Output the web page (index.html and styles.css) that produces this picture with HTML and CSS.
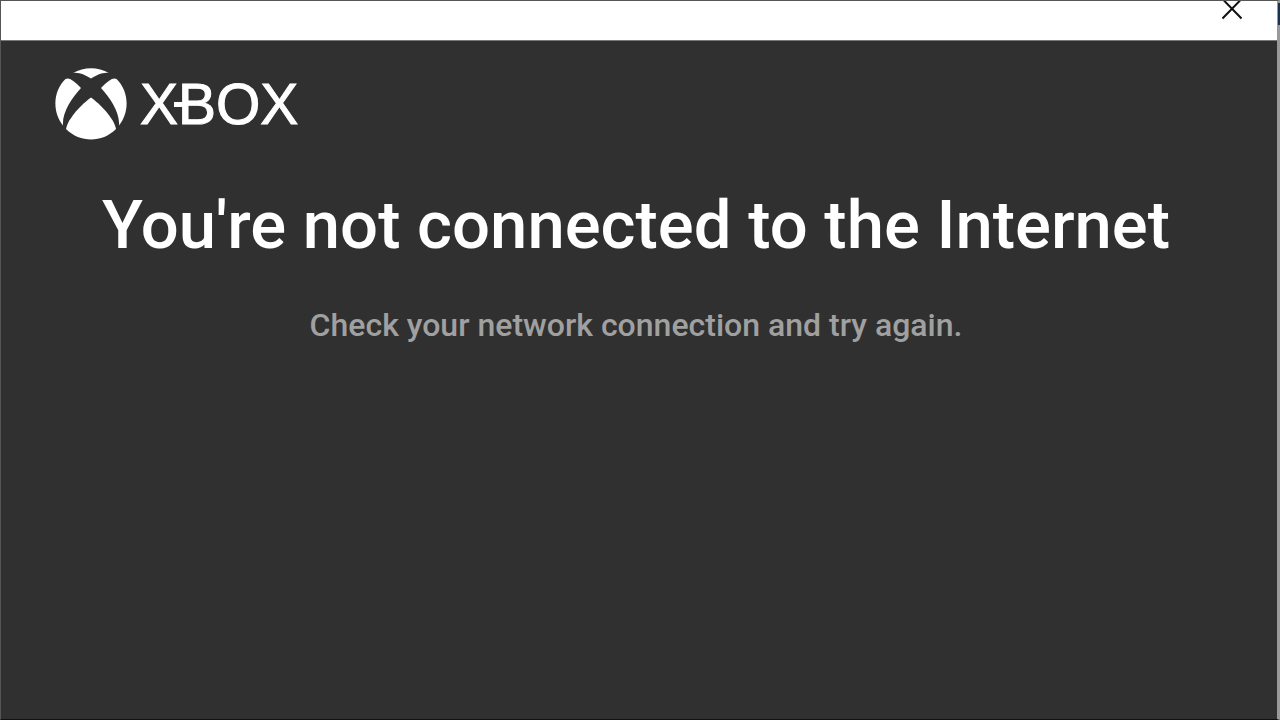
FILE: index.html
```html
<!DOCTYPE html>
<html lang="en">
<head>
<meta charset="utf-8">
<meta name="viewport" content="width=device-width, initial-scale=1">
<title>Xbox</title>
<link rel="stylesheet" href="styles.css">
</head>
<body>
<div class="window">
  <header class="titlebar">
    <button class="close" type="button" aria-label="Close">
      <svg class="close-icon" viewBox="0 0 20 20" aria-hidden="true"><path d="M0.500-2 19.500 17.500M19.500-2 0.500 17.500"/></svg>
    </button>
  </header>
  <main class="content">
    <div class="brand">
      <svg class="sphere" viewBox="0 0 72 72" aria-hidden="true">
        <path d="M18 5C29-1.500 43-1.500 54 5C48 4 41 7.500 36 10.500C31 7.500 24 4 18 5Z"/>
        <path d="M10.500 11Q15 8 26 20C17 30 7 44 8 57.500C-3 44-2 23 10.500 11Z"/>
        <path d="M61.500 11Q57 8 46 20C55 30 65 44 64 57.500C75 44 74 23 61.500 11Z"/>
        <path d="M36 29.500C45 36 59 50 61 61C47 75 25 75 11 61C13 50 27 36 36 29.500Z"/>
      </svg>
      <span class="wordmark">XBOX</span>
    </div>
    <h1 class="heading">You're not connected to the Internet</h1>
    <p class="message">Check your network connection and try again.</p>
  </main>
</div>
</body>
</html>
```
FILE: styles.css
```css
* { box-sizing: border-box; }
body {
  margin: 0;
  background: #303030;
  font-family: Roboto, sans-serif;
}
.window {
  position: relative;
  display: flex;
  flex-direction: column;
  min-height: 100vh;
  border: 1px solid #555;
  border-bottom-color: #111;
  border-right: 3px solid #999;
  background: #303030;
}
.window::after {
  content: "";
  position: absolute;
  top: 2px;
  right: -3px;
  width: 2px;
  height: 22px;
  background: #1c3150;
}
.titlebar {
  display: flex;
  justify-content: flex-end;
  height: 40px;
  padding-right: 22px;
  background: #fff;
  border-bottom: 1px solid #777;
}
.close {
  display: flex;
  justify-content: center;
  width: 46px;
  height: 20px;
  padding: 0;
  border: 0;
  background: transparent;
}
.close-icon {
  width: 20px;
  height: 20px;
  fill: none;
  stroke: #111;
  stroke-width: 2;
}
.content { padding: 27px 6px 40px 0; }
.brand {
  display: flex;
  align-items: center;
  gap: 13px;
  height: 72px;
  padding-left: 54px;
}
.sphere {
  width: 72px;
  height: 72px;
  fill: #fff;
}
.wordmark {
  position: relative;
  color: #fff;
  font-family: "Liberation Sans", Arial, sans-serif;
  font-size: 57px;
  line-height: 72px;
  -webkit-text-stroke: 1px #fff;
}
.wordmark::before {
  content: "";
  position: absolute;
  top: 34px;
  left: 34px;
  width: 12px;
  height: 5px;
  background: #fff;
}
.heading {
  margin: 45px 0 0;
  color: #fff;
  font-size: 67px;
  font-weight: 500;
  line-height: 80px;
  text-align: center;
}
.message {
  margin: 40px 0 0;
  color: #a0a0a0;
  font-size: 32px;
  font-weight: 500;
  line-height: 40px;
  text-align: center;
}
```
